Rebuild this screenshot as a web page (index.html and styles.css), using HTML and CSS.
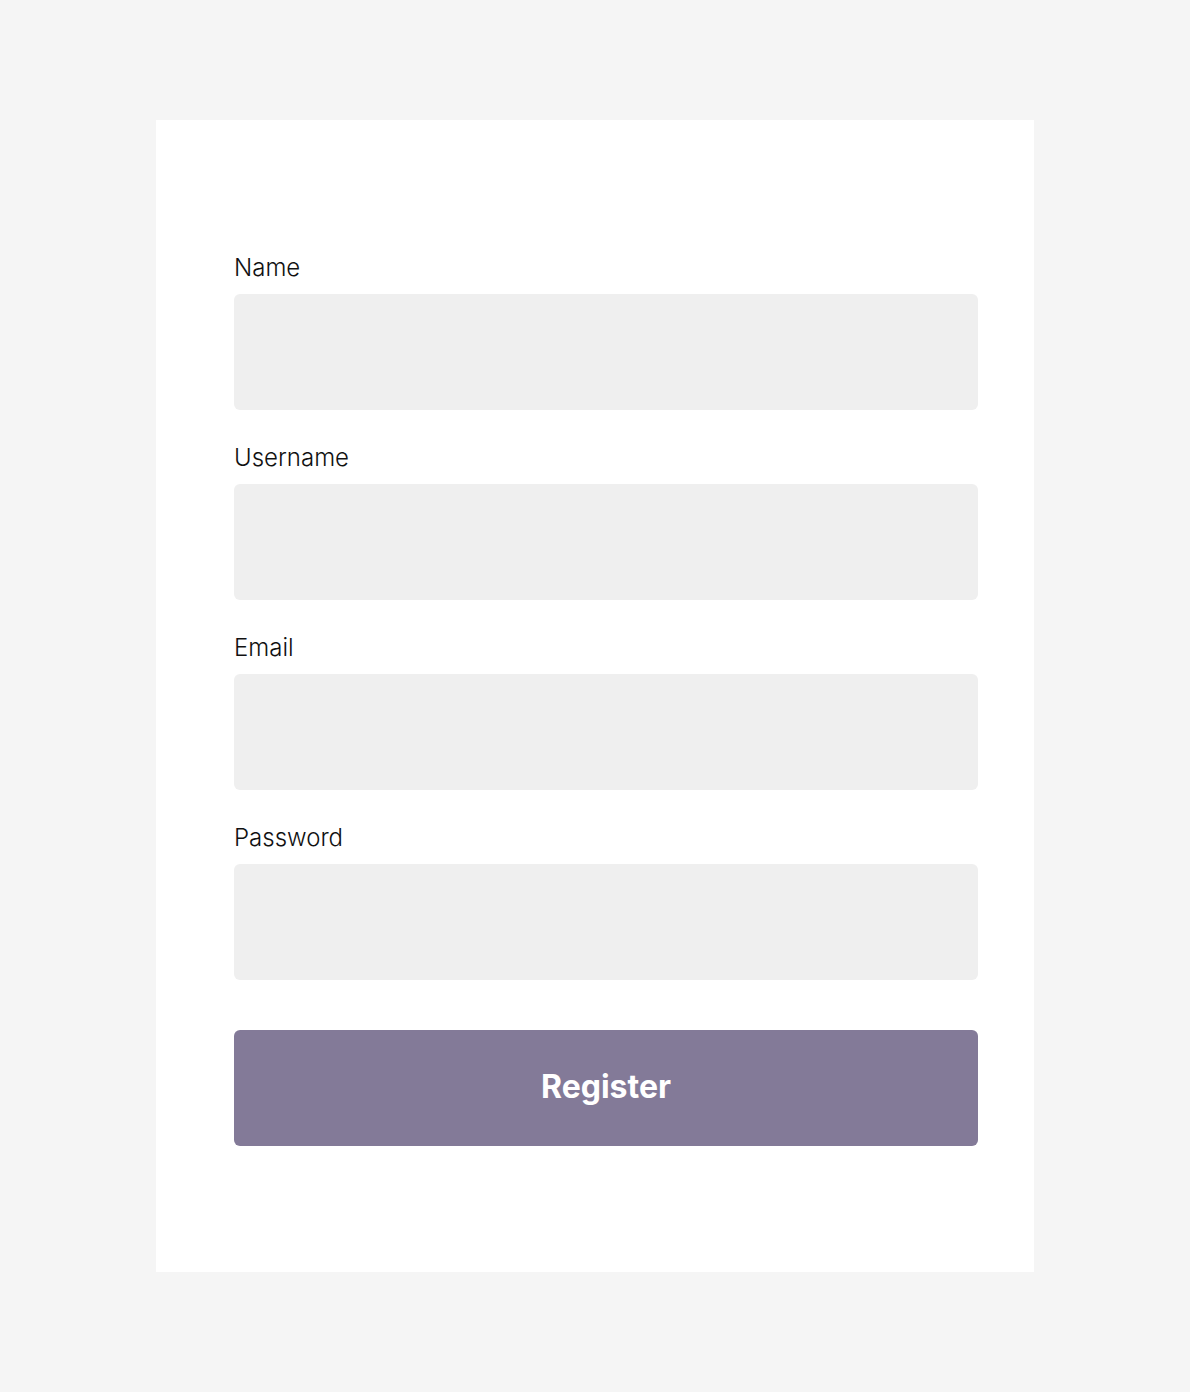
FILE: index.html
```html
<!DOCTYPE html>
<html lang="en">
<head>
<meta charset="utf-8">
<title>Register</title>
<link rel="stylesheet" href="styles.css">
</head>
<body>
<main class="page">
  <form class="card">
    <div class="field">
      <label class="label" for="name">Name</label>
      <input class="input" id="name" type="text">
    </div>
    <div class="field">
      <label class="label" for="username">Username</label>
      <input class="input" id="username" type="text">
    </div>
    <div class="field">
      <label class="label" for="email">Email</label>
      <input class="input" id="email" type="email">
    </div>
    <div class="field">
      <label class="label" for="password">Password</label>
      <input class="input" id="password" type="password">
    </div>
    <button class="button" type="button">Register</button>
  </form>
</main>
</body>
</html>
```
FILE: styles.css
```css
html, body {
  margin: 0;
  padding: 0;
  background: #f5f5f5;
  font-family: Inter, "Noto Sans", sans-serif;
}
.page {
  display: flex;
  justify-content: center;
  padding: 120px 0;
}
.card {
  width: 878px;
  box-sizing: border-box;
  background: #ffffff;
  padding: 133px 56px 126px 78px;
  display: flex;
  flex-direction: column;
}
.field {
  display: flex;
  flex-direction: column;
  margin-bottom: 33px;
}
.label {
  font-size: 24px;
  line-height: 29px;
  font-weight: 300;
  color: #111111;
  margin-bottom: 12px;
}
.input {
  height: 116px;
  box-sizing: border-box;
  border: none;
  border-radius: 6px;
  background: #efefef;
  margin: 0;
  padding: 0 20px;
  font-family: inherit;
  font-size: 24px;
}
.button {
  margin-top: 17px;
  height: 116px;
  border: none;
  border-radius: 6px;
  background: #837a98;
  color: #ffffff;
  font-family: inherit;
  font-size: 32px;
  font-weight: 700;
  padding: 0 0 4px;
  cursor: pointer;
}
```
